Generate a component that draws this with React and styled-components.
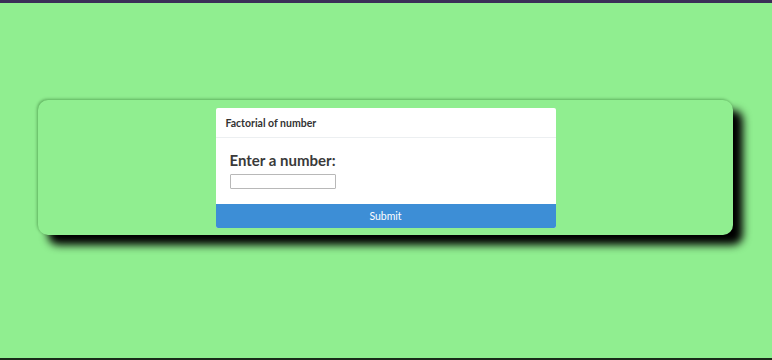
import React, { useState } from "react";
import styled, { createGlobalStyle } from "styled-components";

const GlobalStyle = createGlobalStyle`
  html, body {
    margin: 0;
    padding: 0;
    height: 100%;
  }
  body {
    background: #90ee90;
    font-family: Lato, "Open Sans", sans-serif;
    border-top: 3px solid #3b2e58;
    border-bottom: 2px solid #1a2a1a;
    box-sizing: border-box;
    overflow: hidden;
  }
`;

const Page = styled.div`
  padding: 97px 39px 0 38px;
`;

const Panel = styled.div`
  background: #90ee90;
  border-radius: 10px;
  box-shadow: 10px 10px 8px #000, -1px -1px 3px rgba(0, 60, 0, 0.35);
  height: 135px;
  display: flex;
  justify-content: center;
  padding-top: 8px;
  box-sizing: border-box;
`;

const Card = styled.form`
  width: 340px;
  height: 120px;
  background: #fff;
  border-radius: 2px;
  display: flex;
  flex-direction: column;
  overflow: hidden;
`;

const Header = styled.div`
  height: 29px;
  display: flex;
  align-items: center;
  padding: 0 10px;
  border-bottom: 1px solid #eceff1;
  font-size: 10.5px;
  font-weight: 700;
  color: #333;
`;

const Body = styled.div`
  flex: 1;
  padding: 12px 14px 0;
  display: flex;
  flex-direction: column;
  align-items: flex-start;
  gap: 3px;
`;

const Label = styled.label`
  font-size: 15px;
  font-weight: 700;
  color: #3a3a3a;
  line-height: 21px;
`;

const Input = styled.input`
  width: 106px;
  height: 15px;
  box-sizing: border-box;
  border: 1px solid #b8b8b8;
  border-radius: 1px;
  padding: 0 3px;
  font-size: 10px;
  outline: none;
`;

const Button = styled.button`
  height: 24px;
  border: none;
  background: #3d8ed6;
  color: #fff;
  font-family: inherit;
  font-size: 10.5px;
  cursor: pointer;
`;

function App() {
  const [value, setValue] = useState("");

  return (
    <>
      <GlobalStyle />
      <Page>
        <Panel>
          <Card onSubmit={(e) => e.preventDefault()}>
            <Header>Factorial of number</Header>
            <Body>
              <Label htmlFor="num">Enter a number:</Label>
              <Input
                id="num"
                value={value}
                onChange={(e) => setValue(e.target.value)}
              />
            </Body>
            <Button type="submit">Submit</Button>
          </Card>
        </Panel>
      </Page>
    </>
  );
}

export default App;
